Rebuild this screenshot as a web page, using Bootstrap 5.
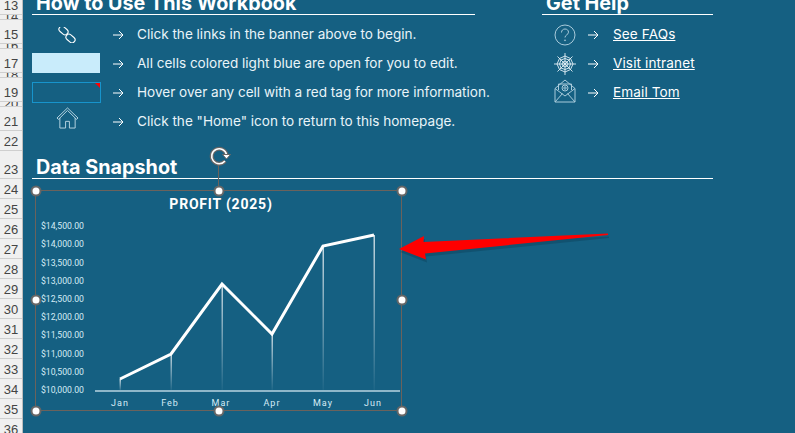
<!DOCTYPE html>
<html lang="en"><head><meta charset="utf-8"><title>Workbook</title>
<link href="https://cdn.jsdelivr.net/npm/bootstrap@5.3.0/dist/css/bootstrap.min.css" rel="stylesheet">
<style>
html,body{margin:0;height:433px;overflow:hidden;background:#156082}
.sheet{width:795px;height:433px;overflow:hidden;background:#156082;font-family:"Inter","Noto Sans",sans-serif;color:#e9f4f9;position:relative}
.gutter{width:23px;flex:none;background:#f0f0f0;border-right:1px solid #bdbdbd;font-family:"Liberation Sans",sans-serif;font-size:13px;color:#444}
.rn{flex:none;overflow:hidden;border-bottom:1px solid #cfcfcf;display:flex;align-items:flex-end;justify-content:center;line-height:16px}
.rn-thin{align-items:center}
.pane{flex:1 1 auto;min-width:0;padding-left:9px}
.h-sec{height:15px;display:flex;align-items:flex-end;border-bottom:1px solid #fff;overflow:hidden;font-weight:700;font-size:19.800px;line-height:22px;color:#fff;padding-left:4px}
.h-sec span{white-space:nowrap}
.howto{width:443px}
.helpc{width:171px;margin-left:67px}
.stack{padding-top:5px}
.tip{height:29px;font-size:13.550px;white-space:nowrap}
.ic{width:70px;flex:none;display:flex;justify-content:center;align-items:center}
.ar{width:35px;flex:none;padding-left:11px;display:flex}
.cell-a{width:68px;height:20px;background:#c9ecfb;margin:0 2px 2px 0}
.cell-b{width:69px;height:21px;border:1px solid #1794cc;position:relative;margin:0 1px 1px 0}
.cell-b::after{content:"";position:absolute;right:0;top:0;border-style:solid;border-width:0 5px 5px 0;border-color:transparent #f00 transparent transparent}
.home-ic{margin-bottom:7px}
.ic2{width:42px;flex:none;display:flex;justify-content:center;padding-left:4px}
.ar2{width:29px;flex:none;display:flex;padding-left:4px}
.tip a{color:#fff;letter-spacing:.12px}
.snap{width:681px;margin-top:15px}
.snap .h-sec{height:28px}
.chartbox{position:relative;width:367px;height:221px;margin:11px 0 0 3px;border:1px solid #6b625c}
.chartbox .plot{display:block;position:absolute;left:-1px;top:-1px}
.hd{position:absolute;width:11px;height:11px;border-radius:50%;background:#fff;border:2px solid #666;transform:translate(-50%,-50%)}
.stem{position:absolute;left:182px;top:-26px;width:1px;height:26px;background:#6b625c}
.chartbox .rot{position:absolute;left:172px;top:-47px}
.pointer{position:absolute;left:399px;top:233px}
.chart-t{font:700 14px "Roboto",sans-serif;letter-spacing:.8px;fill:#fff}
.ya{font:9.500px "Roboto",sans-serif;fill:#d5ecf6}
.xa{font:9px "Roboto",sans-serif;fill:#d5ecf6;letter-spacing:1px}
</style></head>
<body>
<div class="sheet d-flex">
  <div class="gutter d-flex flex-column">
    <div class="rn" style="height:15px">13</div>
    <div class="rn rn-thin" style="height:5px">14</div>
    <div class="rn" style="height:24px">15</div>
    <div class="rn rn-thin" style="height:5px">16</div>
    <div class="rn" style="height:24px">17</div>
    <div class="rn rn-thin" style="height:5px">18</div>
    <div class="rn" style="height:24px">19</div>
    <div class="rn rn-thin" style="height:5px">20</div>
    <div class="rn" style="height:24px">21</div>
    <div class="rn" style="height:20px">22</div>
    <div class="rn" style="height:28px">23</div>
    <div class="rn" style="height:20px">24</div>
    <div class="rn" style="height:20px">25</div>
    <div class="rn" style="height:20px">26</div>
    <div class="rn" style="height:20px">27</div>
    <div class="rn" style="height:20px">28</div>
    <div class="rn" style="height:20px">29</div>
    <div class="rn" style="height:20px">30</div>
    <div class="rn" style="height:20px">31</div>
    <div class="rn" style="height:20px">32</div>
    <div class="rn" style="height:20px">33</div>
    <div class="rn" style="height:20px">34</div>
    <div class="rn" style="height:20px">35</div>
    <div class="rn" style="height:20px">36</div>
  </div>
  <div class="pane">
    <div class="d-flex">
      <div class="howto">
        <div class="h-sec"><span>How to Use This Workbook</span></div>
        <div class="stack">
          <div class="tip d-flex align-items-center">
            <div class="ic"><svg width="18" height="16" viewBox="0 0 18 16" fill="none" stroke="#fff" stroke-width="1.100"><rect x="0.500" y="0.500" width="10" height="6" rx="3" transform="rotate(40 5.500 3.500)"/><rect x="7.500" y="8.500" width="10" height="6" rx="3" transform="rotate(40 12.500 11.500)"/></svg></div>
            <div class="ar"><svg width="11" height="10" viewBox="0 0 11 10" fill="none" stroke="#fff" stroke-width="1"><path d="M0 5h10M6 1l4 4-4 4"/></svg></div>
            <span>Click the links in the banner above to begin.</span>
          </div>
          <div class="tip d-flex align-items-center">
            <div class="ic"><div class="cell-a"></div></div>
            <div class="ar"><svg width="11" height="10" viewBox="0 0 11 10" fill="none" stroke="#fff" stroke-width="1"><path d="M0 5h10M6 1l4 4-4 4"/></svg></div>
            <span>All cells colored light blue are open for you to edit.</span>
          </div>
          <div class="tip d-flex align-items-center">
            <div class="ic"><div class="cell-b"></div></div>
            <div class="ar"><svg width="11" height="10" viewBox="0 0 11 10" fill="none" stroke="#fff" stroke-width="1"><path d="M0 5h10M6 1l4 4-4 4"/></svg></div>
            <span>Hover over any cell with a red tag for more information.</span>
          </div>
          <div class="tip d-flex align-items-center">
            <div class="ic"><svg class="home-ic" width="23" height="22" viewBox="0 0 24 23" fill="none" stroke="#b9d6e3" stroke-width="1"><path d="M1 11.500 12 1l11 10.500-1.600 1.400L12 3.600 2.600 12.900z"/><path d="M4 11.500V22h6v-7h4v7h6V11.500"/></svg></div>
            <div class="ar"><svg width="11" height="10" viewBox="0 0 11 10" fill="none" stroke="#fff" stroke-width="1"><path d="M0 5h10M6 1l4 4-4 4"/></svg></div>
            <span>Click the "Home" icon to return to this homepage.</span>
          </div>
        </div>
      </div>
      <div class="helpc">
        <div class="h-sec"><span>Get Help</span></div>
        <div class="stack">
          <div class="tip d-flex align-items-center">
            <div class="ic2"><svg width="22" height="22" viewBox="0 0 22 22" fill="none" stroke="#a9cbdb" stroke-width="1"><circle cx="11" cy="11" r="10"/><path d="M7.500 8.500C7.500 6.300 9 5 11 5s3.500 1.300 3.500 3.200c0 2.600-3.500 2.600-3.500 5.300"/><circle cx="11" cy="16.300" r=".5"/></svg></div>
            <div class="ar2"><svg width="11" height="10" viewBox="0 0 11 10" fill="none" stroke="#fff" stroke-width="1"><path d="M0 5h10M6 1l4 4-4 4"/></svg></div>
            <a href="#">See FAQs</a>
          </div>
          <div class="tip d-flex align-items-center">
            <div class="ic2"><svg width="22" height="22" viewBox="0 0 22 22" fill="none" stroke="#e4f1f7" stroke-width=".9"><path d="M11 0v22M0 11h22M3.500 3.500l15 15M18.500 3.500l-15 15"/><path d="M11 3 16.500 5.500 19 11 16.500 16.500 11 19 5.500 16.500 3 11 5.500 5.500zM11 5.500 15 7 16.500 11 15 15 11 16.500 7 15 5.500 11 7 7zM11 8 13 9 14 11 13 13 11 14 9 13 8 11 9 9z"/></svg></div>
            <div class="ar2"><svg width="11" height="10" viewBox="0 0 11 10" fill="none" stroke="#fff" stroke-width="1"><path d="M0 5h10M6 1l4 4-4 4"/></svg></div>
            <a href="#">Visit intranet</a>
          </div>
          <div class="tip d-flex align-items-center">
            <div class="ic2"><svg class="mb-1" width="22" height="24" viewBox="0 0 22 24" fill="none" stroke="#a9cbdb" stroke-width="1"><path d="M1 9.500V23h20V9.500L11 1z"/><path d="M4.500 11V5h13v6"/><path d="M1 9.500 11 17l10-7.500M1 23l7.500-8.500M21 23l-7.500-8.500"/><circle cx="11" cy="9" r="3"/><circle cx="11" cy="9" r="1.200"/></svg></div>
            <div class="ar2"><svg width="11" height="10" viewBox="0 0 11 10" fill="none" stroke="#fff" stroke-width="1"><path d="M0 5h10M6 1l4 4-4 4"/></svg></div>
            <a href="#">Email Tom</a>
          </div>
        </div>
      </div>
    </div>
    <div class="snap"><div class="h-sec"><span>Data Snapshot</span></div></div>
    <div class="chartbox">
      <svg class="plot" width="368" height="222" viewBox="35 190 368 222">
        <defs><linearGradient id="dl" x1="0" y1="0" x2="0" y2="1"><stop offset="0" stop-color="#fff" stop-opacity=".75"/><stop offset="1" stop-color="#fff" stop-opacity=".03"/></linearGradient></defs>
        <text class="chart-t" x="221" y="209" text-anchor="middle">PROFIT (2025)</text>
        <g class="ya">
          <text x="41" y="229" textLength="43" lengthAdjust="spacingAndGlyphs">$14,500.00</text>
          <text x="41" y="247" textLength="43" lengthAdjust="spacingAndGlyphs">$14,000.00</text>
          <text x="41" y="266" textLength="43" lengthAdjust="spacingAndGlyphs">$13,500.00</text>
          <text x="41" y="284" textLength="43" lengthAdjust="spacingAndGlyphs">$13,000.00</text>
          <text x="41" y="302" textLength="43" lengthAdjust="spacingAndGlyphs">$12,500.00</text>
          <text x="41" y="320" textLength="43" lengthAdjust="spacingAndGlyphs">$12,000.00</text>
          <text x="41" y="338" textLength="43" lengthAdjust="spacingAndGlyphs">$11,500.00</text>
          <text x="41" y="357" textLength="43" lengthAdjust="spacingAndGlyphs">$11,000.00</text>
          <text x="41" y="375" textLength="43" lengthAdjust="spacingAndGlyphs">$10,500.00</text>
          <text x="41" y="393" textLength="43" lengthAdjust="spacingAndGlyphs">$10,000.00</text>
        </g>
        <rect x="119.500" y="379" width="1.500" height="12" fill="url(#dl)"/><rect x="170.500" y="354" width="1.500" height="37" fill="url(#dl)"/><rect x="221.500" y="284" width="1.500" height="107" fill="url(#dl)"/><rect x="271.500" y="334" width="1.500" height="57" fill="url(#dl)"/><rect x="322.500" y="246" width="1.500" height="145" fill="url(#dl)"/><rect x="373.500" y="235" width="1.500" height="156" fill="url(#dl)"/>
        <rect x="95" y="390" width="305" height="2" fill="#8fb7c9"/>
        <polyline points="120,379 171,354 222,284 272,334 323,246 374,235" fill="none" stroke="#fff" stroke-width="3"/>
        <g class="xa" text-anchor="middle"><text x="120" y="406">Jan</text><text x="170" y="406">Feb</text><text x="221" y="406">Mar</text><text x="272" y="406">Apr</text><text x="323" y="406">May</text><text x="373" y="406">Jun</text></g>
      </svg>
      <div class="stem"></div>
      <svg class="rot" width="24" height="24" viewBox="0 0 24 24" fill="none"><path d="M18.500 10.500A7.500 7.500 0 1 0 17 17" stroke="#666" stroke-width="4"/><path d="M18.500 10.500A7.500 7.500 0 1 0 17 17" stroke="#fff" stroke-width="1.600"/><path d="M14.500 10.500h8l-4 4.500z" fill="#fff" stroke="#666"/></svg>
      <div class="hd" style="left:0;top:-.5px"></div><div class="hd" style="left:182.500px;top:-.5px"></div><div class="hd" style="left:365.500px;top:-.5px"></div>
      <div class="hd" style="left:0;top:109px"></div><div class="hd" style="left:365.500px;top:109px"></div>
      <div class="hd" style="left:0;top:219.500px"></div><div class="hd" style="left:182.500px;top:219.500px"></div><div class="hd" style="left:365.500px;top:219.500px"></div>
    </div>
  </div>
  <svg class="pointer" width="215" height="34" viewBox="399 233 215 34"><polygon points="399,249 424,236 423.500,242 608,233.500 608,235 425,253.500 426,259.500" fill="#0b3a50" opacity=".35" transform="translate(1,3)"/><polygon points="399,249 424,236 423.500,242 608,233.500 608,235 425,253.500 426,259.500" fill="#f00"/></svg>
</div>
</body></html>
